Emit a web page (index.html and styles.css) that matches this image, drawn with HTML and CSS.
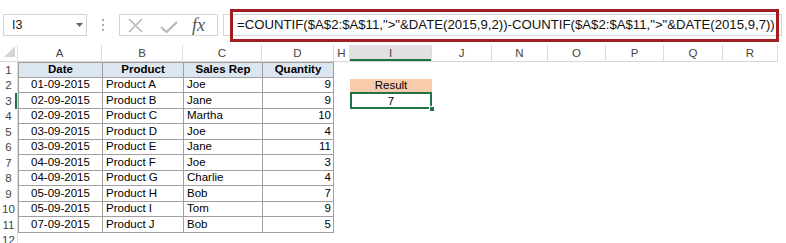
FILE: index.html
```html
<!DOCTYPE html>
<html>
<head>
<meta charset="utf-8">
<link rel="stylesheet" href="styles.css">
</head>
<body>
<div class="fbar">
  <div class="namebox">
    <span class="nb-text">I3</span>
    <svg class="nb-arrow" width="7" height="4" viewBox="0 0 7 4"><path d="M0 0 L7 0 L3.5 4 Z" fill="#666"/></svg>
  </div>
  <div class="dots">
    <svg width="2" height="12" viewBox="0 0 2 12"><rect x="0" y="0" width="2" height="2" fill="#aaa"/><rect x="0" y="5" width="2" height="2" fill="#aaa"/><rect x="0" y="10" width="2" height="2" fill="#aaa"/></svg>
  </div>
  <div class="btns">
    <svg class="ico-x" width="15" height="15" viewBox="0 0 15 15"><path d="M1 1 L14 14 M14 1 L1 14" stroke="#b8b8b8" stroke-width="1.6" fill="none"/></svg>
    <svg class="ico-ok" width="18" height="12" viewBox="0 0 18 12"><path d="M1 6 L6.5 11 L17 1" stroke="#b8b8b8" stroke-width="2.2" fill="none"/></svg>
    <span class="fx">fx</span>
  </div>
  <div class="formula">=COUNTIF($A$2:$A$11,"&gt;"&amp;DATE(2015,9,2))-COUNTIF($A$2:$A$11,"&gt;"&amp;DATE(2015,9,7))</div>
  <div class="redbox"></div>
</div>

<div class="sheet">
  <div class="row hdr">
    <div class="h corner"><svg width="18" height="16" viewBox="0 0 18 16"><path d="M4 12 L15 12 L15 1 Z" fill="#d6d6d6"/></svg></div>
    <div class="h">A</div><div class="h">B</div><div class="h">C</div><div class="h">D</div>
    <div class="h">H</div><div class="h hsel">I</div><div class="h">J</div><div class="h">N</div>
    <div class="h">O</div><div class="h">P</div><div class="h">Q</div><div class="h">R</div>
  </div>

  <div class="row">
    <div class="rn">1</div>
    <div class="t th ctr">Date</div><div class="t th ctr">Product</div><div class="t th ctr">Sales Rep</div><div class="t th ctr last">Quantity</div>
  </div>
  <div class="row">
    <div class="rn">2</div>
    <div class="t ctr">01-09-2015</div><div class="t">Product A</div><div class="t">Joe</div><div class="t rt last">9</div>
    <div class="res">Result</div>
  </div>
  <div class="row">
    <div class="rn selr">3</div>
    <div class="t ctr">02-09-2015</div><div class="t">Product B</div><div class="t">Jane</div><div class="t rt last">9</div>
    <div class="sel">7<div class="selbox"></div><div class="handle"></div></div>
  </div>
  <div class="row">
    <div class="rn">4</div>
    <div class="t ctr">02-09-2015</div><div class="t">Product C</div><div class="t">Martha</div><div class="t rt last">10</div>
  </div>
  <div class="row">
    <div class="rn">5</div>
    <div class="t ctr">03-09-2015</div><div class="t">Product D</div><div class="t">Joe</div><div class="t rt last">4</div>
  </div>
  <div class="row">
    <div class="rn">6</div>
    <div class="t ctr">03-09-2015</div><div class="t">Product E</div><div class="t">Jane</div><div class="t rt last">11</div>
  </div>
  <div class="row">
    <div class="rn">7</div>
    <div class="t ctr">04-09-2015</div><div class="t">Product F</div><div class="t">Joe</div><div class="t rt last">3</div>
  </div>
  <div class="row">
    <div class="rn">8</div>
    <div class="t ctr">04-09-2015</div><div class="t">Product G</div><div class="t">Charlie</div><div class="t rt last">4</div>
  </div>
  <div class="row">
    <div class="rn">9</div>
    <div class="t ctr">05-09-2015</div><div class="t">Product H</div><div class="t">Bob</div><div class="t rt last">7</div>
  </div>
  <div class="row">
    <div class="rn">10</div>
    <div class="t ctr">05-09-2015</div><div class="t">Product I</div><div class="t">Tom</div><div class="t rt last">9</div>
  </div>
  <div class="row">
    <div class="rn">11</div>
    <div class="t ctr">07-09-2015</div><div class="t">Product J</div><div class="t">Bob</div><div class="t rt last">5</div>
  </div>
  <div class="row">
    <div class="rn">12</div>
  </div>
</div>
</body>
</html>
```

FILE: styles.css
```css
* { box-sizing: border-box; }
html, body { margin: 0; padding: 0; background: #fff; overflow: hidden; }
body {
  width: 786px;
  height: 243px;
  font-family: "Liberation Sans", Arial, sans-serif;
  font-size: 11.5px;
  color: #000;
}

/* formula bar */
.fbar {
  position: relative;
  height: 45px;
  display: flex;
  align-items: flex-start;
  padding-top: 14px;
}
.namebox {
  margin-left: 3px;
  width: 84px;
  height: 22px;
  border: 1px solid #d4d4d4;
  display: flex;
  align-items: center;
  padding-left: 8px;
  font-size: 12.5px;
  color: #222;
}
.nb-arrow { margin-left: auto; margin-right: 3px; }
.dots {
  width: 32px;
  height: 22px;
  display: flex;
  align-items: center;
  justify-content: center;
}
.btns {
  width: 99px;
  height: 22px;
  border: 1px solid #d4d4d4;
  display: flex;
  align-items: center;
  padding-left: 8px;
}
.ico-x { margin-top: 1px; }
.ico-ok { margin-left: 17px; margin-top: 3px; }
.fx {
  margin-left: 14px;
  font-family: "Liberation Serif", "Times New Roman", serif;
  font-style: italic;
  font-size: 18px;
  color: #555;
  line-height: 20px;
}
.formula {
  margin-left: 5px;
  width: 559px;
  height: 22px;
  border: 1px solid #d4d4d4;
  padding-left: 13px;
  font-size: 13.2px;
  line-height: 20px;
  white-space: nowrap;
  color: #111;
}
.redbox {
  position: absolute;
  left: 230px;
  top: 9px;
  width: 549px;
  height: 33px;
  border: 3px solid #a11d21;
}

/* sheet grid */
.row {
  display: grid;
  grid-template-columns: 18px 84px 81px 79px 72px 16px 82px 60px 56px 58px 58px 59px 55px;
  width: 778px;
  height: 15.5px;
}
.hdr {
  height: 17px;
  border-bottom: 1px solid #d6d6d6;
}
.h {
  border-right: 1px solid #dcdcdc;
  text-align: center;
  color: #444;
  line-height: 16px;
}
.corner { position: relative; }
.corner svg { display: block; }
.hsel {
  background: #e1e1e1;
  box-shadow: inset 0 -2px 0 #217346;
}

.rn {
  border-right: 1px solid #dcdcdc;
  color: #444;
  display: flex;
  align-items: flex-end;
  justify-content: center;
  padding-bottom: 1px;
  line-height: 13px;
}
.selr { box-shadow: inset -2px 0 0 #217346; }

.t {
  border-left: 1px solid #a0a0a0;
  border-bottom: 1px solid #a0a0a0;
  display: flex;
  align-items: flex-end;
  padding: 0 3px 1px 3px;
  line-height: 13px;
  white-space: nowrap;
  overflow: hidden;
}
.th {
  background: #dce6f1;
  font-weight: bold;
  border-top: 1px solid #a0a0a0;
}
.ctr { justify-content: center; }
.rt { justify-content: flex-end; padding-right: 2px; }
.last { border-right: 1px solid #a0a0a0; }

.res {
  grid-column: 7;
  background: #f8cbad;
  display: flex;
  align-items: flex-end;
  justify-content: center;
  padding-bottom: 1px;
  line-height: 13px;
  margin-top: 1px;
}
.sel {
  grid-column: 7;
  position: relative;
  display: flex;
  align-items: flex-end;
  justify-content: center;
  padding-bottom: 1px;
  line-height: 13px;
}
.selbox {
  position: absolute;
  left: 0;
  top: -1px;
  right: 0;
  bottom: 0;
  border: 2px solid #217346;
}
.handle {
  position: absolute;
  right: -3px;
  bottom: -3px;
  width: 6px;
  height: 6px;
  background: #217346;
  border: 1px solid #fff;
}
```
